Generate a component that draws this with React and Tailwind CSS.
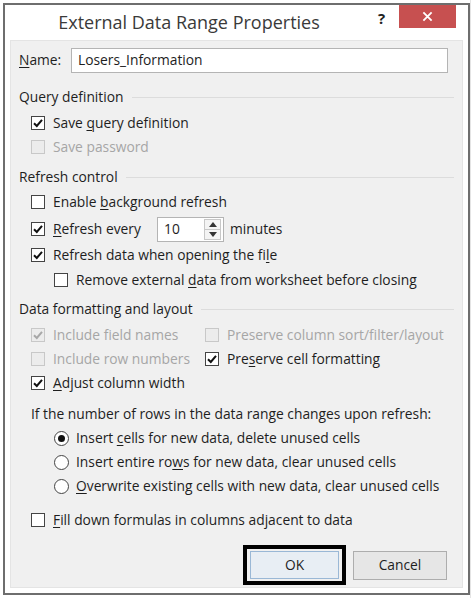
import React from "react";

const font = { fontFamily: '"Open Sans", "Noto Sans", sans-serif' };

function U({ children }) {
  return <span className="underline underline-offset-2 decoration-1">{children}</span>;
}

function Check({ checked, disabled }) {
  return (
    <span
      className={`relative inline-block w-[14px] h-[14px] shrink-0 border ${
        disabled ? "border-[#c8c8c8] bg-[#ececec]" : "border-[#444] bg-white"
      }`}
    >
      {checked && (
        <svg viewBox="0 0 14 14" className="absolute -left-px -top-px w-[14px] h-[14px]">
          <path
            d="M3 7.2 L5.8 10 L11 3.8"
            fill="none"
            stroke={disabled ? "#a8a8a8" : "#111"}
            strokeWidth="2"
          />
        </svg>
      )}
    </span>
  );
}

function Radio({ checked }) {
  return (
    <span className="inline-flex items-center justify-center w-[15px] h-[15px] shrink-0 rounded-full border border-[#444] bg-white">
      {checked && <span className="w-[7px] h-[7px] rounded-full bg-[#111]" />}
    </span>
  );
}

function Row({ className = "", children }) {
  return <div className={`flex items-center h-[24px] whitespace-nowrap ${className}`}>{children}</div>;
}

function CheckRow({ checked, disabled, children, className = "" }) {
  return (
    <Row className={className}>
      <Check checked={checked} disabled={disabled} />
      <span className={`ml-[8px] ${disabled ? "text-[#a6a6a6]" : "text-[#1e1e1e]"}`}>{children}</span>
    </Row>
  );
}

function Section({ title, className = "" }) {
  return (
    <Row className={`pl-[8px] pr-[8px] ${className}`}>
      <span className="text-[#1e1e1e] whitespace-nowrap">{title}</span>
      <span className="flex-1 ml-[8px] h-px bg-[#dcdcdc]" />
    </Row>
  );
}

export default function App() {
  return (
    <div className="w-[474px] h-[598px] bg-white relative overflow-hidden" style={font}>
      <div className="absolute right-0 top-0 bottom-0 w-[4px] border-l border-[#e4e4e4]" />
      <div className="ml-[3px] mt-[3px] w-[467px] h-[592px] border-2 border-[#6e6e6e] bg-white flex flex-col">
        <div className="h-[35px] flex relative shrink-0">
          <div className="absolute left-0 w-[368px] top-[4px] text-center text-[18px] text-[#3a3a3a] leading-[26px]">
            External Data Range Properties
          </div>
          <div className="absolute left-[373px] top-[2px] text-[15px] font-bold text-[#222]">?</div>
          <div className="absolute left-[394px] top-[0px] w-[57px] h-[23px] bg-[#c75050] flex items-center justify-center">
            <svg viewBox="0 0 12 12" className="w-[11px] h-[11px]">
              <path d="M1.5 1.5 L10.5 10.5 M10.5 1.5 L1.5 10.5" stroke="#fff" strokeWidth="2" />
            </svg>
          </div>
        </div>
        <div className="ml-[5px] w-[453px] h-[548px] bg-[#f0f0f0] border border-[#e4e4e4] text-[13.8px] flex flex-col">
          <div className="flex items-center mt-[7px] pl-[8px]">
            <span className="text-[#1e1e1e] w-[52px]">
              <U>N</U>ame:
            </span>
            <div className="w-[377px] h-[25px] border border-[#b4b4b4] bg-white flex items-center pl-[6px] text-[#1e1e1e]">
              Losers_Information
            </div>
          </div>

          <Section title="Query definition" className="mt-[12px]" />
          <div className="pl-[20px] flex flex-col">
            <CheckRow checked className="mt-[2px]">
              Save <U>q</U>uery definition
            </CheckRow>
            <CheckRow disabled>Save password</CheckRow>
          </div>

          <Section title="Refresh control" className="mt-[6px]" />
          <div className="pl-[20px] flex flex-col">
            <CheckRow className="mt-[1px]">
              Enable <U>b</U>ackground refresh
            </CheckRow>
            <Row className="mt-[3px]">
              <Check checked />
              <span className="ml-[8px] text-[#1e1e1e] w-[104px]">
                <U>R</U>efresh every
              </span>
              <div className="w-[67px] h-[25px] border border-[#b4b4b4] bg-white flex items-center">
                <span className="pl-[6px] flex-1 text-[#1e1e1e]">10</span>
                <div className="w-[17px] h-[21px] mr-[2px] flex flex-col border border-[#c8c8c8]">
                  <div className="flex-1 flex items-center justify-center border-b border-[#c8c8c8] bg-[#f4f4f4]">
                    <svg viewBox="0 0 8 5" className="w-[8px] h-[5px]">
                      <path d="M0 5 L4 0 L8 5 Z" fill="#333" />
                    </svg>
                  </div>
                  <div className="flex-1 flex items-center justify-center bg-[#f4f4f4]">
                    <svg viewBox="0 0 8 5" className="w-[8px] h-[5px]">
                      <path d="M0 0 L4 5 L8 0 Z" fill="#333" />
                    </svg>
                  </div>
                </div>
              </div>
              <span className="ml-[6px] text-[#1e1e1e]">minutes</span>
            </Row>
            <CheckRow checked className="mt-[2px]">
              Refresh data when opening the fi<U>l</U>e
            </CheckRow>
            <CheckRow className="mt-[1px] pl-[23px]">
              Remove external <U>d</U>ata from worksheet before closing
            </CheckRow>
          </div>

          <Section title="Data formatting and layout" className="mt-[5px]" />
          <div className="pl-[20px] flex flex-col">
            <div className="flex mt-[2px]">
              <div className="w-[174px] flex flex-col">
                <CheckRow checked disabled>
                  Include field names
                </CheckRow>
                <CheckRow disabled>Include row numbers</CheckRow>
              </div>
              <div className="flex flex-col">
                <CheckRow disabled>Preserve column sort/filter/layout</CheckRow>
                <CheckRow checked>
                  Pre<U>s</U>erve cell formatting
                </CheckRow>
              </div>
            </div>
            <CheckRow checked>
              <U>A</U>djust column width
            </CheckRow>
          </div>

          <Row className="mt-[7px] pl-[20px] text-[#1e1e1e]">
            If the number of rows in the data range changes upon refresh:
          </Row>
          <div className="pl-[43px] flex flex-col text-[#1e1e1e]">
            <Row>
              <Radio checked />
              <span className="ml-[7px]">
                Insert <U>c</U>ells for new data, delete unused cells
              </span>
            </Row>
            <Row>
              <Radio />
              <span className="ml-[7px]">
                Insert entire ro<U>w</U>s for new data, clear unused cells
              </span>
            </Row>
            <Row>
              <Radio />
              <span className="ml-[7px]">
                <U>O</U>verwrite existing cells with new data, clear unused cells
              </span>
            </Row>
          </div>

          <div className="pl-[20px]">
            <CheckRow className="mt-[10px]">
              <U>F</U>ill down formulas in columns adjacent to data
            </CheckRow>
          </div>

          <div className="flex justify-end items-center mt-[13px] pr-[15px]">
            <div className="w-[103px] h-[40px] border-[4px] border-black flex items-center justify-center">
              <div className="w-[89px] h-[28px] border border-[#9ab8d6] bg-[#e8eef4] flex items-center justify-center text-[#1e1e1e]">
                OK
              </div>
            </div>
            <div className="ml-[7px] w-[94px] h-[29px] border border-[#adadad] bg-[#e6e6e6] flex items-center justify-center text-[#1e1e1e]">
              Cancel
            </div>
          </div>
        </div>
      </div>
    </div>
  );
}
